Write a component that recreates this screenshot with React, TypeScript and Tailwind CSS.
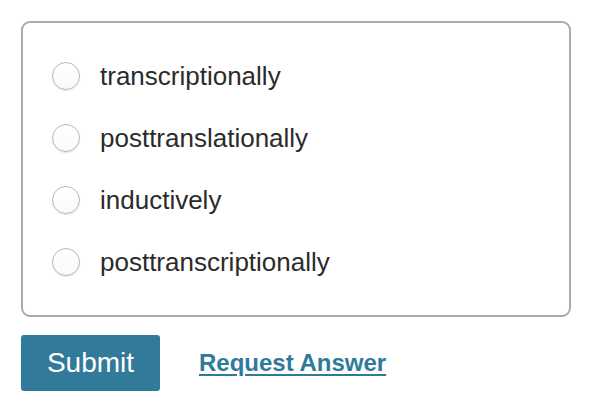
import React, { useState } from 'react';

const options = [
  'transcriptionally',
  'posttranslationally',
  'inductively',
  'posttranscriptionally',
];

export default function App() {
  const [selected, setSelected] = useState<number | null>(null);

  return (
    <div className="w-[616px] h-[420px] bg-white pt-[21px] pl-[21px] font-['Helvetica','Liberation_Sans',Arial,sans-serif]">
      {/* Choices */}
      <div className="w-[550px] h-[296px] border-2 border-[#ababab] rounded-[9px] pt-[22px] pl-[29px]">
        {options.map((label, i) => (
          <label
            key={label}
            className="flex items-center h-[62px] cursor-pointer"
            onClick={() => setSelected(i)}
          >
            <span className="w-[28px] h-[28px] rounded-full border border-[#b8b8b8] bg-gradient-to-b from-white to-[#fafafa] shadow-[0_1px_1px_rgba(0,0,0,0.1)] flex items-center justify-center">
              {selected === i && <span className="w-[12px] h-[12px] rounded-full bg-[#327a9a]" />}
            </span>
            <span className="ml-[20px] text-[26px] text-[#2b2b2b] leading-none -mt-[1px]">{label}</span>
          </label>
        ))}
      </div>

      {/* Actions */}
      <div className="flex items-center mt-[18px]">
        <button className="w-[139px] h-[56px] bg-[#327a9a] rounded-[3px] text-white text-[28px] leading-none">
          Submit
        </button>
        <a href="#" className="ml-[39px] text-[24px] font-bold text-[#2f7a9b] underline underline-offset-[3px] decoration-2">
          Request Answer
        </a>
      </div>
    </div>
  );
}
